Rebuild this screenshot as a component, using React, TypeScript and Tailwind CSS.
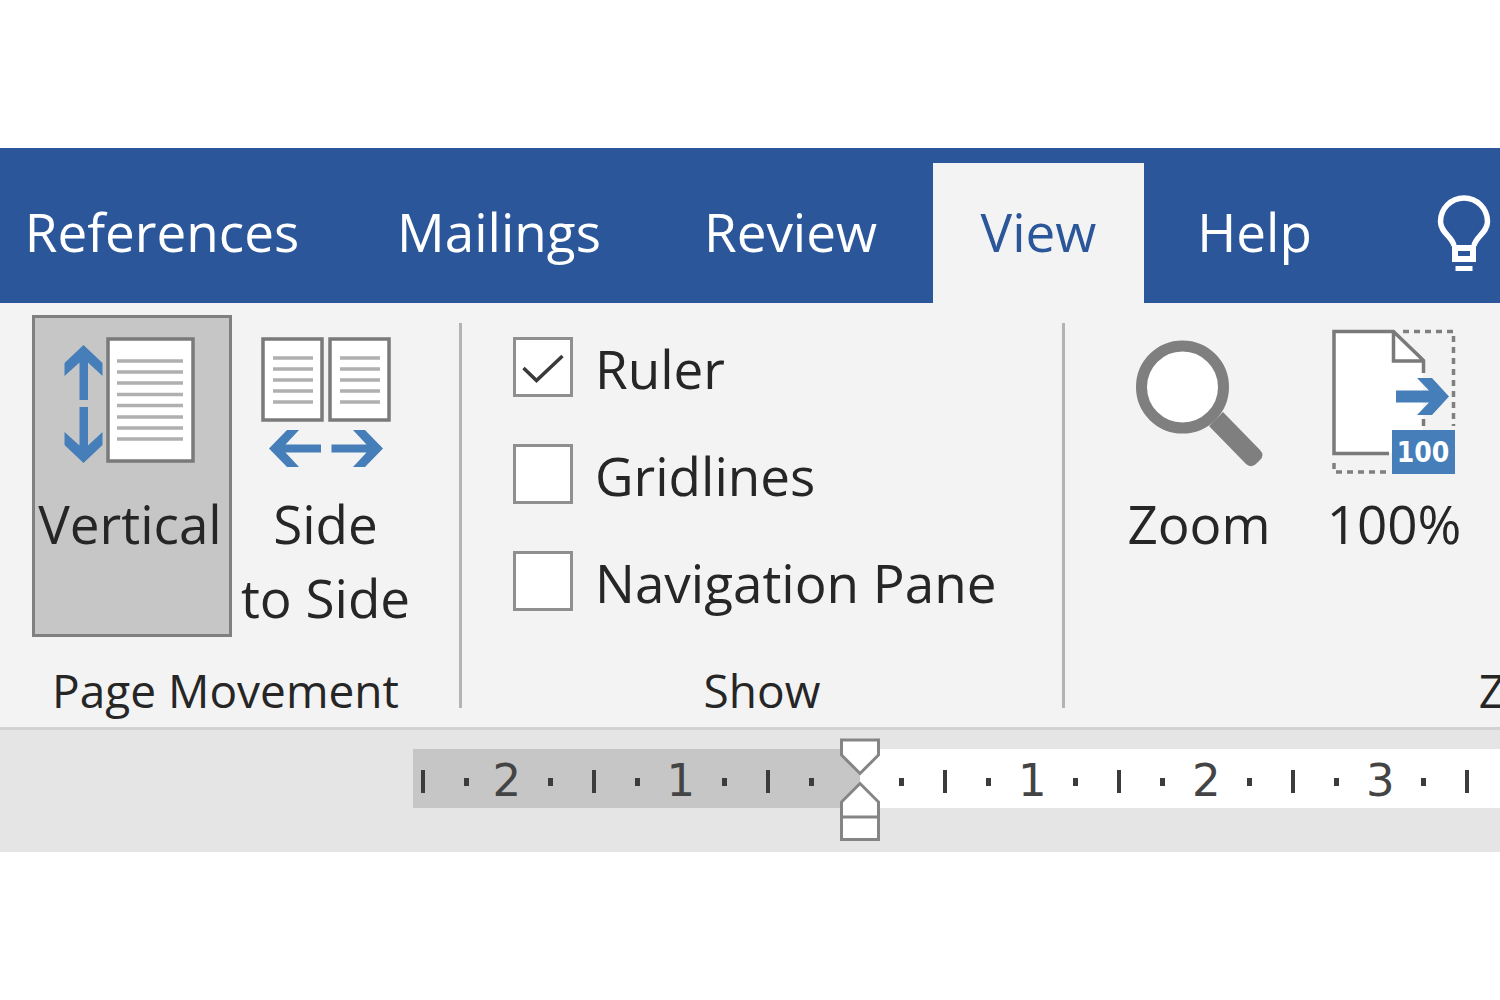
import React, { useState, ReactNode } from 'react';

interface ShowOption {
  id: string;
  label: string;
  checked: boolean;
}

interface LargeButtonProps {
  icon: ReactNode;
  className: string;
  pressed?: boolean;
  onClick?: () => void;
  children: ReactNode;
}

const tabs = [
  { name: 'References', width: 'w-[324px]' },
  { name: 'Mailings', width: 'w-[350px]' },
  { name: 'Review', width: 'w-[233px]' },
  { name: 'View', width: 'w-[211px] ml-[26px]' },
  { name: 'Help', width: 'w-[221px]' },
];

const VerticalIcon = () => (
  <svg width="134" height="130" viewBox="1 0 134 130" aria-hidden="true">
    <g fill="#457eb8">
      <path d="M21.5 10 40.500 28v13L26 27.500V65h-8.500V27.500L2.500 41V28z" />
      <path d="M21.500 128 40.500 110V97L26 110.500V72h-8.500v38.500L2.500 97v13z" />
    </g>
    <rect x="46" y="4" width="85" height="122" fill="#fff" stroke="#7a7a7a" strokeWidth="3.500" />
    <path
      d="M55 26h66M55 37h66M55 48h66M55 59.500h66M55 70.500h66M55 82h66M55 93h66M55 104h66"
      stroke="#b0b0b0"
      strokeWidth="3.500"
    />
  </svg>
);

const SideToSideIcon = () => (
  <svg width="130" height="134" viewBox="0 0 130 134" aria-hidden="true">
    <g fill="#fff" stroke="#7a7a7a" strokeWidth="3.500">
      <rect x="2" y="4" width="59" height="81" />
      <rect x="69" y="4" width="59" height="81" />
    </g>
    <path
      d="M12 23h40M12 34h40M12 45h40M12 56h40M12 67h40M79 23h40M79 34h40M79 45h40M79 56h40M79 67h40"
      stroke="#b0b0b0"
      strokeWidth="3.500"
    />
    <g fill="#457eb8">
      <path d="M8 113.500 26 95h12L24.500 109.500H60v8H24.500L38 132H26z" />
      <path d="M122 113.500 104 95H92l13.500 14.500H70.500v8h35L92 132h12z" />
    </g>
  </svg>
);

const ZoomIcon = () => (
  <svg width="130" height="134" viewBox="0 0 130 134" aria-hidden="true">
    <path d="M75 91 89 77 126 115Q131 120 126 125L123 128Q118 134 112 129Z" fill="#7f7f7f" />
    <circle cx="48.500" cy="52" r="41" fill="#fff" stroke="#7f7f7f" strokeWidth="11" />
  </svg>
);

const HundredIcon = () => (
  <svg width="124" height="146" viewBox="0 0 124 146" aria-hidden="true">
    <path d="M2 2h59l30 30v92H2z" fill="#fff" />
    <path
      d="M57 124.500H2V2.500H61.500L91.500 31.500V44M61.500 2.500V32H91.500M91.500 90v7"
      fill="none"
      stroke="#7a7a7a"
      strokeWidth="3.500"
    />
    <path
      d="M71 2.500H121.500V97M54 143H2V131"
      fill="none"
      stroke="#7f7f7f"
      strokeWidth="3.500"
      strokeDasharray="6 5"
    />
    <path d="M64 61.500H97L85 49h15l17 18.500L100 86H85l12-12.500H64z" fill="#457eb8" />
    <rect x="60" y="101" width="63" height="44" fill="#457eb8" />
    <text
      x="91"
      y="133"
      textAnchor="middle"
      fill="#fff"
      className="font-['DejaVu_Sans_Condensed','DejaVu_Sans',sans-serif] text-[28px] font-bold"
    >
      100
    </text>
  </svg>
);

const BulbIcon = () => (
  <svg width="56" height="78" viewBox="0 0 56 78" fill="none" stroke="#fff" aria-hidden="true">
    <path
      d="M18 51C17 42 4.500 38 4.500 26.500a23.500 23.500 0 0 1 47 0C51.500 38 39 42 38 51"
      strokeWidth="5.500"
    />
    <path d="M19 50v17M37 50v17M18 53h20M18 64h20" strokeWidth="6" />
    <path d="M19.500 73.500h17" strokeWidth="5" />
  </svg>
);

const IndentMarker = () => (
  <svg
    className="absolute left-[426px] -top-[11px]"
    width="42"
    height="104"
    viewBox="0 0 42 104"
    fill="#fff"
    stroke="#858585"
    strokeWidth="3"
    aria-hidden="true"
  >
    <path d="M2.500 2h37v15L21 35.500 2.500 17z" />
    <path d="M21 45.500 39.500 64v37.500h-37V64zM2.500 79h37" />
  </svg>
);

const LargeButton: React.FC<LargeButtonProps> = ({ icon, className, pressed, onClick, children }) => (
  <button
    type="button"
    onClick={onClick}
    aria-pressed={pressed}
    className={`flex flex-col items-center shrink-0 h-[322px] border-3 whitespace-nowrap leading-[74px] ${
      pressed ? 'bg-[#c6c6c6] border-[#808080]' : 'border-transparent'
    } ${className}`}
  >
    <span className="flex h-[169px] shrink-0 justify-center">{icon}</span>
    {children}
  </button>
);

const Separator = () => <div className="w-[3px] shrink-0 mt-5 mb-[19px] bg-[#b3b3b3]" />;

const GroupLabel = ({ children }: { children: ReactNode }) => (
  <div className="mt-[22px] text-center text-[46px] leading-[62px]">{children}</div>
);

// One mark of the ruler: "|" is a half unit, "." a quarter, anything else a number
const Mark = ({ value }: { value: string }) => (
  <span className="flex h-full items-center justify-center">
    {value === '|' && <span className="h-[23px] w-1 mt-1.5 bg-[#3c3c3c]" />}
    {value === '.' && <span className="h-2 w-[5px] mt-1.5 bg-[#3c3c3c]" />}
    {value !== '|' && value !== '.' && <span className="pt-1">{value}</span>}
  </span>
);

const Unit = ({ marks }: { marks: string[] }) => (
  <div className="grid w-[174px] h-full shrink-0 grid-cols-4">
    {marks.map((mark, index) => (
      <Mark key={index} value={mark} />
    ))}
  </div>
);

const App: React.FC = () => {
  const [activeTab, setActiveTab] = useState('View');
  const [movement, setMovement] = useState('vertical');
  const [options, setOptions] = useState<ShowOption[]>([
    { id: 'ruler', label: 'Ruler', checked: true },
    { id: 'gridlines', label: 'Gridlines', checked: false },
    { id: 'navigation', label: 'Navigation Pane', checked: false },
  ]);

  const toggleOption = (id: string) => {
    setOptions(options.map(option =>
      option.id === id ? { ...option, checked: !option.checked } : option
    ));
  };

  return (
    <div className="flex min-h-screen flex-col justify-center overflow-hidden bg-white font-['Open_Sans',sans-serif] text-[53px] text-[#262626]">
      <nav className="flex h-[155px] overflow-hidden bg-[#2b579a] pt-[15px]">
        {tabs.map(tab => (
          <button
            key={tab.name}
            type="button"
            onClick={() => setActiveTab(tab.name)}
            className={`shrink-0 pb-0.5 ${tab.width} ${
              activeTab === tab.name ? 'bg-[#f3f3f3] text-[#2b579a]' : 'text-white'
            }`}
          >
            {tab.name}
          </button>
        ))}
        <button type="button" aria-label="Tell me" className="ml-[71px] shrink-0 self-start pt-8">
          <BulbIcon />
        </button>
      </nav>

      <section className="flex overflow-hidden border-b-3 border-[#d2d2d2] bg-[#f3f3f3]">
        <div className="shrink-0 pt-3 pr-10 pb-1.5 pl-8">
          <div className="flex">
            <LargeButton
              className="w-[200px] pr-1"
              icon={<span className="pt-[17px]"><VerticalIcon /></span>}
              pressed={movement === 'vertical'}
              onClick={() => setMovement('vertical')}
            >
              Vertical
            </LargeButton>
            <LargeButton
              className="w-[187px]"
              icon={<span className="pt-[17px]"><SideToSideIcon /></span>}
              pressed={movement === 'side'}
              onClick={() => setMovement('side')}
            >
              <span>Side</span>
              <span>to Side</span>
            </LargeButton>
          </div>
          <GroupLabel>Page Movement</GroupLabel>
        </div>
        <Separator />

        <div className="w-[600px] shrink-0 pt-3 pb-1.5">
          <div className="flex h-[322px] flex-col gap-[47px] pt-[22px] pl-[51px]">
            {options.map(option => (
              <label key={option.id} className="flex h-[60px] items-center gap-[22px] whitespace-nowrap">
                <span className="relative h-[60px] w-[60px] shrink-0">
                  <input
                    type="checkbox"
                    checked={option.checked}
                    onChange={() => toggleOption(option.id)}
                    className="block h-full w-full appearance-none border-3 border-[#8f8f8f] bg-white"
                  />
                  {option.checked && (
                    <svg className="pointer-events-none absolute inset-0" viewBox="0 0 60 60" fill="none">
                      <path d="M10.500 31 23.500 43.500 49.500 19" stroke="#3a3a3a" strokeWidth="3.500" />
                    </svg>
                  )}
                </span>
                <span className="pt-1">{option.label}</span>
              </label>
            ))}
          </div>
          <GroupLabel>Show</GroupLabel>
        </div>
        <Separator />

        <div className="w-[952px] shrink-0 pt-3 pb-1.5">
          <div className="flex pl-[39px]">
            <LargeButton className="w-[190px]" icon={<span className="pt-[17px]"><ZoomIcon /></span>}>
              Zoom
            </LargeButton>
            <LargeButton className="w-[200px]" icon={<span className="pt-[11px]"><HundredIcon /></span>}>
              100%
            </LargeButton>
          </div>
          <GroupLabel>Zoom</GroupLabel>
        </div>
      </section>

      <section className="overflow-hidden bg-[#e5e5e5] pt-[19px] pb-11 pl-[413px] font-['DejaVu_Sans',sans-serif] text-[45px] leading-[55px] text-[#444]">
        <div className="relative flex h-[59px]">
          <div className="flex w-[447px] shrink-0 bg-[#c6c6c6]">
            <div className="flex w-[72px] shrink-0 justify-between pr-4 pl-2">
              <Mark value="|" />
              <Mark value="." />
            </div>
            <Unit marks={['2', '.', '|', '.']} />
            <Unit marks={['1', '.', '|', '.']} />
          </div>
          <div className="flex min-w-0 flex-1 overflow-hidden bg-white pl-5">
            <Unit marks={['.', '|', '.', '1']} />
            <Unit marks={['.', '|', '.', '2']} />
            <Unit marks={['.', '|', '.', '3']} />
            <Unit marks={['.', '|']} />
          </div>
          <IndentMarker />
        </div>
      </section>
    </div>
  );
};

export default App;
